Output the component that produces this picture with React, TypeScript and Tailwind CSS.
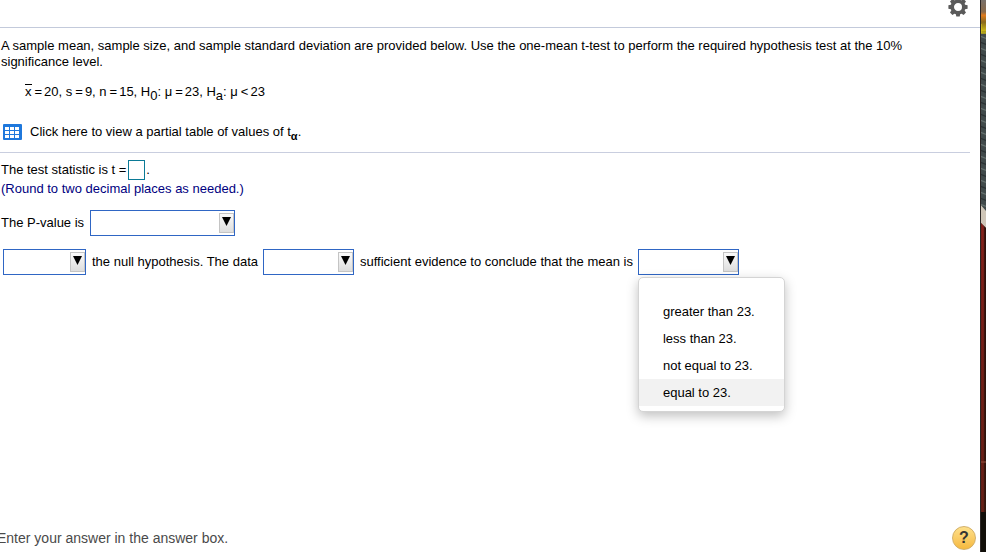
import React from "react";

function Gear() {
  const teeth = [0, 45, 90, 135, 180, 225, 270, 315];
  return (
    <svg viewBox="0 0 20 20" className="block size-5" aria-hidden="true">
      <g fill="#5a5a5a">
        {teeth.map((a) => (
          <path key={a} d="M7.6 4 8.3 0.4h3.4L12.4 4z" transform={`rotate(${a} 10 10)`} />
        ))}
      </g>
      <circle cx="10" cy="10" r="5.7" fill="none" stroke="#5a5a5a" strokeWidth="3.4" />
    </svg>
  );
}

function TableIcon() {
  return (
    <svg viewBox="0 0 19 16" className="block h-4 w-[19px] shrink-0" aria-hidden="true">
      <rect width="19" height="16" rx="1" fill="#1f78dc" />
      <g fill="#fff">
        {[3, 7, 11].map((y) =>
          [2, 7, 12].map((x) => <rect key={`${x}-${y}`} x={x} y={y} width="4" height="3" />)
        )}
      </g>
    </svg>
  );
}

function Scenery() {
  return (
    <svg viewBox="0 0 6 552" preserveAspectRatio="none" className="absolute inset-0 h-full w-full" aria-hidden="true">
      <defs>
        <linearGradient id="top" x1="0" y1="0" x2="0" y2="1">
          <stop offset="0" stopColor="#77706a" />
          <stop offset="0.35" stopColor="#8b6a48" />
          <stop offset="0.45" stopColor="#e07a1c" />
          <stop offset="0.65" stopColor="#8a6a1c" />
          <stop offset="0.9" stopColor="#c9b416" />
          <stop offset="1" stopColor="#5c5a2a" />
        </linearGradient>
        <linearGradient id="red" x1="0" y1="0" x2="1" y2="0">
          <stop offset="0" stopColor="#4a1512" />
          <stop offset="0.35" stopColor="#8c211b" />
          <stop offset="0.6" stopColor="#76201a" />
          <stop offset="0.8" stopColor="#30100c" />
          <stop offset="1" stopColor="#2a0f0b" />
        </linearGradient>
        <linearGradient id="fade" x1="0" y1="0" x2="0" y2="1">
          <stop offset="0" stopColor="#1c1008" stopOpacity="0" />
          <stop offset="1" stopColor="#3a2010" stopOpacity="0.45" />
        </linearGradient>
      </defs>
      <rect width="6" height="552" fill="#414a4b" />
      <rect width="6" height="34" fill="url(#top)" />
      <path d="M1 24v9h5" fill="none" stroke="#d8c81c" />
      {Array.from({ length: 30 }, (_, i) => (
        <path key={i} d={`M0 ${36 + i * 6}l6 2.5`} stroke={i % 2 ? "#2b3234" : "#66716f"} strokeWidth="1.2" />
      ))}
      <path d="M0 204 6 211V228L0 222z" fill="#cfc6b8" />
      <path d="M0 222 6 228V552H0z" fill="url(#red)" />
      <path d="M0 222 6 228V552H0z" fill="url(#fade)" />
      <rect y="461" width="6" height="2" fill="#8a4a38" opacity="0.6" />
      <rect y="512" width="6" height="40" fill="#120f0a" />
      <rect width="1" height="552" fill="#2b2625" />
    </svg>
  );
}

function Op({ children }: { children: string }) {
  return <span className="ml-[3px] mr-[2px]">{children}</span>;
}

function Sub({ children }: { children: string }) {
  return <span className="relative top-1">{children}</span>;
}

function Dropdown({ label, width, options }: { label: string; width: string; options: string[] }) {
  return (
    <span className={`relative block h-[26px] shrink-0 ${width}`}>
      <select
        aria-label={label}
        defaultValue=""
        className="block h-full w-full appearance-none rounded-none border border-[#2f66c4] bg-white pl-1 pr-5 outline-none"
      >
        <option value=""></option>
        {options.map((o) => (
          <option key={o}>{o}</option>
        ))}
      </select>
      <span className="pointer-events-none absolute right-px top-[3px] flex h-5 w-[15px] justify-center border border-[#c4c4c4] bg-linear-to-b from-[#fafafa] to-[#dedede] pt-[3px]">
        <svg viewBox="0 0 9 9" className="block size-[9px]" aria-hidden="true">
          <path d="M0 0h9L4.5 9z" fill="#000" />
        </svg>
      </span>
    </span>
  );
}

const conclusions = ["greater than 23.", "less than 23.", "not equal to 23.", "equal to 23."];

export default function App() {
  return (
    <div className="flex min-h-screen bg-white font-['Liberation_Sans',Arial,sans-serif] text-[13px] leading-4 text-black">
      <div className="flex min-w-0 flex-1 flex-col">
        <header className="flex h-7 justify-end border-b border-[#c3cadb] pr-3">
          <button type="button" aria-label="Settings" className="-mt-[3px] h-5">
            <Gear />
          </button>
        </header>

        <main className="flex-1">
          <section className="mr-[10px] border-b border-[#c9cedf] pt-[10px] pb-3">
            <p className="pl-px">
              A sample mean, sample size, and sample standard deviation are provided below. Use the one-mean t-test to
              perform the required hypothesis test at the 10% significance level.
            </p>
            <p className="mt-[14px] h-4 pl-[25px]">
              <span className="inline-block h-[14px] border-t border-black leading-[14px]">x</span>
              <Op>=</Op>20, s<Op>=</Op>9, n<Op>=</Op>15, H<Sub>0</Sub>: μ<Op>=</Op>23, H<Sub>a</Sub>: μ<Op>&lt;</Op>23
            </p>
            <a href="#table" className="mt-6 flex items-center gap-2 pl-[3px]">
              <TableIcon />
              <span className="h-4">
                Click here to view a partial table of values of t
                <span className="relative top-1 text-[11px] font-bold">α</span>.
              </span>
            </a>
          </section>

          <form className="pt-[7px]">
            <div className="flex items-center gap-[2px] pl-px">
              <label htmlFor="stat">The test statistic is t =</label>
              <span className="flex items-center">
                <input id="stat" className="mr-px h-5 w-[17px] border border-[#0b7a96] bg-white outline-none" />.
              </span>
            </div>
            <p className="mt-px pl-px text-[#000080]">(Round to two decimal places as needed.)</p>

            <div className="mt-[13px] flex items-center gap-[6px] pl-px">
              <span>The P-value is</span>
              <Dropdown label="P-value" width="w-[145px]" options={["less than 0.005.", "between 0.10 and 0.20."]} />
            </div>

            <div className="mt-[13px] flex items-center gap-[5px] pl-[3px]">
              <Dropdown label="Decision" width="w-[83px]" options={["Reject", "Do not reject"]} />
              <span className="pl-px">the null hypothesis. The data</span>
              <Dropdown label="Evidence" width="w-[91px]" options={["provide", "do not provide"]} />
              <span className="pl-px">sufficient evidence to conclude that the mean is</span>
              <div className="relative">
                <Dropdown label="Conclusion" width="w-[101px]" options={conclusions} />
                <ul
                  role="listbox"
                  aria-label="Conclusion choices"
                  className="absolute left-0 top-7 w-[147px] rounded-[5px] border border-[#d4d4d4] bg-white pt-5 pb-[5px] shadow-[0_4px_12px_rgba(0,0,0,0.25)]"
                >
                  {conclusions.map((c) => (
                    <li
                      key={c}
                      role="option"
                      aria-selected={c === "equal to 23."}
                      className="flex h-[27px] items-center pl-6 aria-selected:bg-[#f2f2f2]"
                    >
                      {c}
                    </li>
                  ))}
                </ul>
              </div>
            </div>
          </form>
        </main>

        <footer className="flex items-center justify-between pr-1 pb-[2px] text-[14px] text-[#4a4a4a]">
          <p className="-ml-[3px]">Enter your answer in the answer box.</p>
          <button
            type="button"
            aria-label="Help"
            className="flex size-6 items-center justify-center rounded-full border border-[#d3b06a] bg-linear-to-b from-[#fde08a] to-[#f6b93c] text-base font-bold text-[#333333]"
          >
            ?
          </button>
        </footer>
      </div>
      <aside className="relative w-[6px] shrink-0" aria-hidden="true">
        <Scenery />
      </aside>
    </div>
  );
}
